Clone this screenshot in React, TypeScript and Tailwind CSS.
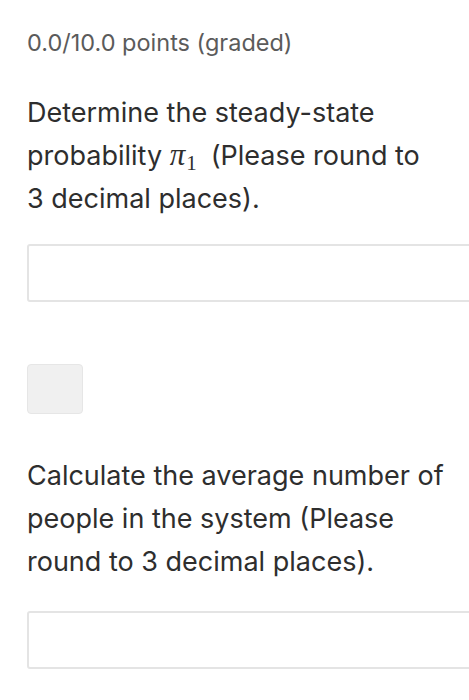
export default function App() {
  return (
    <div className="w-[469px] h-[700px] overflow-hidden bg-white font-['Inter',sans-serif]">
      <div className="pl-[27px] pt-[28px] w-[469px]">
        <p className="text-[23.5px] leading-[30px] text-[#5b5b5b]">0.0/10.0 points (graded)</p>

        <p className="mt-[33px] w-[405px] text-[27px] leading-[43px] text-[#2e2e2e]">
          Determine the steady-state probability{" "}
          <span className="font-['Liberation_Serif',serif] italic text-[31px] leading-[0]">π</span>
          <span className="font-['Liberation_Serif',serif] text-[21px] leading-[0] relative top-[5px] ml-[1px]">1</span>
          <span className="inline-block w-[14px]" />
          (Please round to 3 decimal places).
        </p>

        <div className="mt-[24px] w-[480px] h-[58px] rounded-[3px] border-2 border-[#e4e4e4] bg-white" />

        <div className="mt-[62px] w-[56px] h-[50px] rounded-[4px] border border-[#e6e6e6] bg-[#f0f0f0]" />

        <p className="mt-[40px] w-[442px] text-[27px] leading-[43px] text-[#2e2e2e]">
          Calculate the average number of people in the system (Please round to 3 decimal places).
        </p>

        <div className="mt-[28px] w-[480px] h-[58px] rounded-[3px] border-2 border-[#e4e4e4] bg-white" />
      </div>
    </div>
  );
}
